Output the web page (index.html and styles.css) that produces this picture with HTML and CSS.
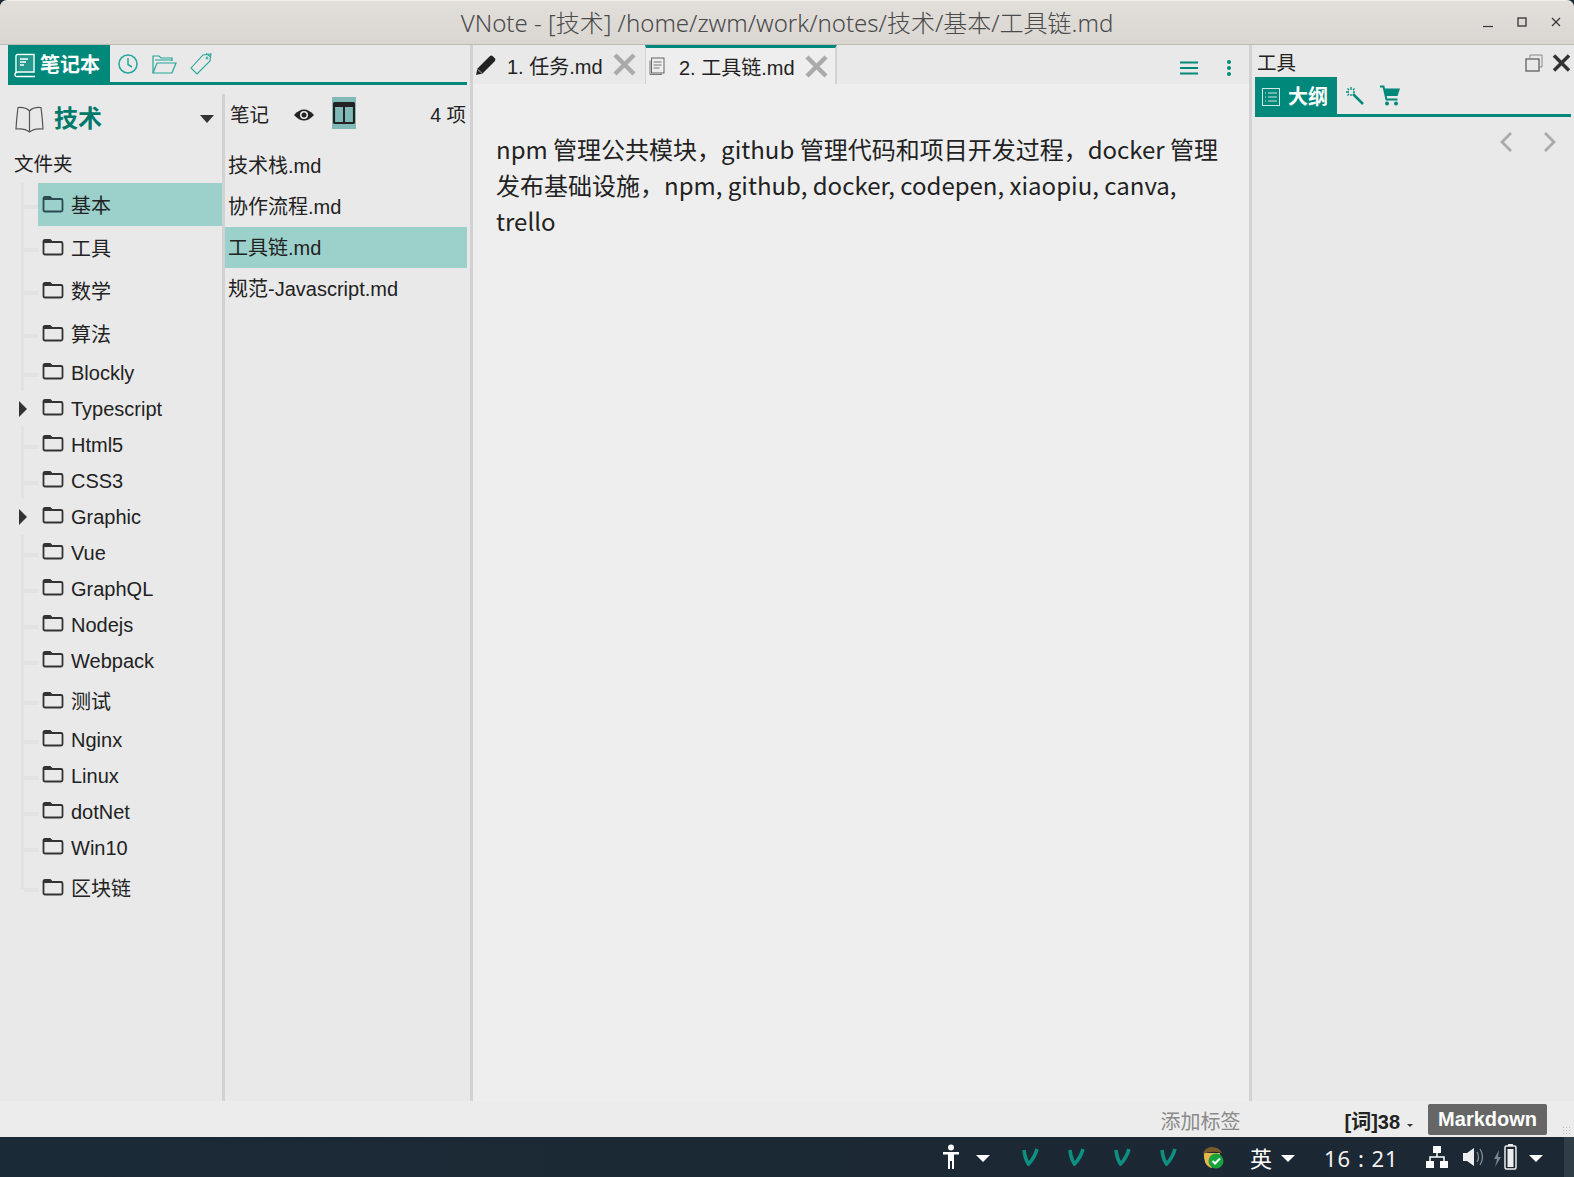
FILE: index.html
```html
<!DOCTYPE html>
<html lang="zh-CN">
<head>
    <meta charset="UTF-8">
    <title>VNote</title>
    <link rel="stylesheet" href="styles.css">
</head>
<body>
    <svg class="defs" width="0" height="0">
        <symbol id="folder" viewBox="0 0 22 18">
            <path d="M1.500 15V3.500Q1.500 2 3 2H8L10 4H19Q20.500 4 20.500 5.500V15Q20.500 16.500 19 16.500H3Q1.500 16.500 1.500 15Z" fill="none" stroke="currentColor" stroke-width="1.800"/>
            <path d="M1.500 3.500Q1.500 2 3 2H8L10 5H1.500Z" fill="currentColor"/>
        </symbol>
        <symbol id="vlogo" viewBox="0 0 18 18">
            <path d="M3 2Q4 11 7.500 16Q13.500 10 16 1" fill="none" stroke="currentColor" stroke-width="3.600"/>
        </symbol>
    </svg>

    <header class="titlebar">
        <span></span>
        <div class="title">VNote - [技术] /home/zwm/work/notes/技术/基本/工具链.md</div>
        <div class="win-controls">
            <svg width="12" height="12" viewBox="0 0 12 12"><path d="M1 10.500H11" stroke="#333" stroke-width="1.200"/></svg>
            <svg width="12" height="12" viewBox="0 0 12 12"><rect x="2" y="2" width="8" height="8" fill="none" stroke="#333" stroke-width="1.300"/></svg>
            <svg width="12" height="12" viewBox="0 0 12 12"><path d="M2 2L10 10M10 2L2 10" stroke="#333" stroke-width="1.100"/></svg>
        </div>
    </header>

    <main class="workspace">
        <section class="left-panel">
            <div class="tabstrip">
                <div class="tab-active">
                    <svg width="24" height="25" viewBox="0 0 24 25"><path d="M3 19V3Q3 1.500 4.500 1.500H21V19H5Q2 19 2 21.500T5 23.500H22" fill="none" stroke="#fff" stroke-width="1.400"/><rect x="5" y="3" width="15" height="15" fill="#fff" opacity=".15"/><path d="M7 6H15M7 9H13M7 12H11" stroke="#fff" stroke-width="1.300"/></svg>
                    <span>笔记本</span>
                </div>
                <svg class="strip-icon" width="22" height="22" viewBox="0 0 22 22"><circle cx="11" cy="11" r="9" fill="none" stroke="#26a69a" stroke-width="1.500"/><path d="M11 5V11.500L15 14" fill="none" stroke="#26a69a" stroke-width="1.500"/></svg>
                <svg class="strip-icon" width="26" height="22" viewBox="0 0 26 22"><path d="M2 20V3H8L10 5H21V8M4 7H21" fill="none" stroke="#26a69a" stroke-width="1.200"/><path d="M2 20L6 10H25L21 20Z" fill="none" stroke="#26a69a" stroke-width="1.200"/></svg>
                <svg class="strip-icon" width="24" height="24" viewBox="0 0 24 24"><path d="M2 16L14 3L22 2L21 9L8 22Z M17 1.500L22 5" fill="none" stroke="#26a69a" stroke-width="1.100"/><circle cx="18" cy="6" r="1" fill="none" stroke="#26a69a"/></svg>
            </div>

            <div class="left-columns">
                <div class="folder-pane">
                    <div class="notebook-select">
                        <svg width="29" height="29" viewBox="0 0 29 29"><path d="M14.500 6Q11 2 3 2.500Q1.500 14 1 24Q10 23 14.500 27Q19 23 28 24Q27.500 14 26 2.500Q18 2 14.500 6ZM14.500 6V27" fill="none" stroke="#555" stroke-width="1.200"/></svg>
                        <span class="notebook-name">技术</span>
                        <i class="arrow-down"></i>
                    </div>
                    <div class="pane-label">文件夹</div>
                    <ul class="tree">
                        <li class="row cjk selected"><svg class="ficon"><use href="#folder"/></svg>基本</li>
                        <li class="row cjk"><svg class="ficon"><use href="#folder"/></svg>工具</li>
                        <li class="row cjk"><svg class="ficon"><use href="#folder"/></svg>数学</li>
                        <li class="row cjk"><svg class="ficon"><use href="#folder"/></svg>算法</li>
                        <li class="row"><svg class="ficon"><use href="#folder"/></svg>Blockly</li>
                        <li class="row expandable"><svg class="ficon"><use href="#folder"/></svg>Typescript</li>
                        <li class="row"><svg class="ficon"><use href="#folder"/></svg>Html5</li>
                        <li class="row"><svg class="ficon"><use href="#folder"/></svg>CSS3</li>
                        <li class="row expandable"><svg class="ficon"><use href="#folder"/></svg>Graphic</li>
                        <li class="row"><svg class="ficon"><use href="#folder"/></svg>Vue</li>
                        <li class="row"><svg class="ficon"><use href="#folder"/></svg>GraphQL</li>
                        <li class="row"><svg class="ficon"><use href="#folder"/></svg>Nodejs</li>
                        <li class="row"><svg class="ficon"><use href="#folder"/></svg>Webpack</li>
                        <li class="row cjk"><svg class="ficon"><use href="#folder"/></svg>测试</li>
                        <li class="row"><svg class="ficon"><use href="#folder"/></svg>Nginx</li>
                        <li class="row"><svg class="ficon"><use href="#folder"/></svg>Linux</li>
                        <li class="row"><svg class="ficon"><use href="#folder"/></svg>dotNet</li>
                        <li class="row"><svg class="ficon"><use href="#folder"/></svg>Win10</li>
                        <li class="row cjk"><svg class="ficon"><use href="#folder"/></svg>区块链</li>
                    </ul>
                </div>
                <div class="notes-pane">
                    <div class="notes-head">
                        <span class="notes-title">笔记</span>
                        <svg class="eye" width="22" height="14" viewBox="0 0 22 14"><path d="M1 7Q11 -4 21 7Q11 18 1 7Z" fill="#222"/><circle cx="11" cy="7" r="4" fill="#eee"/><circle cx="11" cy="7" r="2.500" fill="#222"/></svg>
                        <div class="layout-btn">
                            <svg width="22" height="22" viewBox="0 0 22 22"><rect x="1" y="1" width="20" height="20" rx="1" fill="none" stroke="#222" stroke-width="2.200"/><path d="M1 3.500H21" stroke="#222" stroke-width="3"/><path d="M11 5V21" stroke="#222" stroke-width="2"/></svg>
                        </div>
                        <span class="notes-count">4 项</span>
                    </div>
                    <ul class="note-list">
                        <li>技术栈.md</li>
                        <li>协作流程.md</li>
                        <li class="selected">工具链.md</li>
                        <li>规范-Javascript.md</li>
                    </ul>
                </div>
            </div>
        </section>

        <section class="editor">
            <div class="editor-tabs">
                <div class="doc-tab first">
                    <svg width="22" height="22" viewBox="0 0 22 22"><path d="M1 21L2.500 14.500L14.500 2.500Q16 1 17.500 2L20 4.500Q21 6 19.500 7.500L7.500 19.500Z" fill="#222"/><path d="M3 15.500L6.500 19" stroke="#eee" stroke-width=".8"/></svg>
                    <span class="doc-name">1. 任务.md</span>
                    <svg class="doc-close" width="23" height="23" viewBox="0 0 23 23"><path d="M2 2L21 21M21 2L2 21" stroke="#aaa" stroke-width="4.500"/></svg>
                </div>
                <div class="doc-tab current">
                    <svg width="18" height="19" viewBox="0 0 18 19"><path d="M3 3.500V17.500H15" fill="none" stroke="#777" stroke-width="1"/><rect x="4.500" y="1" width="12.500" height="15" fill="none" stroke="#666" stroke-width="1"/><path d="M6.500 5H14.500M6.500 8H14.500M6.500 11H12.500" stroke="#777" stroke-width="1"/></svg>
                    <span class="doc-name">2. 工具链.md</span>
                    <svg class="doc-close" width="23" height="23" viewBox="0 0 23 23"><path d="M2 2L21 21M21 2L2 21" stroke="#aaa" stroke-width="4.500"/></svg>
                </div>
                <div class="editor-actions">
                    <svg width="18" height="14" viewBox="0 0 18 14"><path d="M0 1.500H18M0 7H18M0 12.500H18" stroke="#00897b" stroke-width="2"/></svg>
                    <svg width="4" height="16" viewBox="0 0 4 16"><circle cx="2" cy="2" r="2" fill="#00897b"/><circle cx="2" cy="8" r="2" fill="#00897b"/><circle cx="2" cy="14" r="2" fill="#00897b"/></svg>
                </div>
            </div>
            <div class="editor-body">
                <p>npm 管理公共模块，github 管理代码和项目开发过程，docker 管理发布基础设施，npm, github, docker, codepen, xiaopiu, canva, trello</p>
            </div>
        </section>

        <aside class="right-panel">
            <div class="tools-head">
                <span>工具</span>
                <div class="tools-btns">
                    <svg width="18" height="18" viewBox="0 0 18 18"><path d="M5 4V1H17V13H14" fill="none" stroke="#888" stroke-width="1"/><rect x="1" y="5" width="13" height="12" fill="none" stroke="#555" stroke-width="1.200"/></svg>
                    <svg width="19" height="18" viewBox="0 0 19 18"><path d="M2 1.500L17 16.500M17 1.500L2 16.500" stroke="#333" stroke-width="3.500"/></svg>
                </div>
            </div>
            <div class="tabstrip tools-strip">
                <div class="tab-active">
                    <svg width="18" height="18" viewBox="0 0 18 18"><rect x=".5" y=".5" width="17" height="17" fill="none" stroke="#cfe8e5" stroke-width="1"/><path d="M3 5H4M6 5H15M3 9H4M6 9H15M3 13H4M6 13H15" stroke="#cfe8e5" stroke-width="1.200"/></svg>
                    <span>大纲</span>
                </div>
                <svg class="strip-icon" width="20" height="20" viewBox="0 0 20 20"><path d="M8 8L18 18" stroke="#00897b" stroke-width="2.500"/><path d="M6 1V4M6 8V10M1 6H4M8 6H10M2.500 2.500L4 4M9.500 2.500L8 4M2.500 9.500L4 8" stroke="#00897b" stroke-width="1.300"/></svg>
                <svg class="strip-icon" width="22" height="22" viewBox="0 0 22 22"><path d="M1 1.500H4.500L7.500 14.500H18.500" fill="none" stroke="#00897b" stroke-width="2"/><path d="M5 3.500H21L18.500 11H6.500Z" fill="#00897b"/><circle cx="8" cy="18.500" r="2" fill="#00897b"/><circle cx="17" cy="18.500" r="2" fill="#00897b"/></svg>
            </div>
            <div class="outline-nav">
                <svg width="14" height="22" viewBox="0 0 14 22"><path d="M12 2L3 11L12 20" fill="none" stroke="#aaa" stroke-width="2.800"/></svg>
                <svg width="14" height="22" viewBox="0 0 14 22"><path d="M2 2L11 11L2 20" fill="none" stroke="#aaa" stroke-width="2.800"/></svg>
            </div>
        </aside>
    </main>

    <footer class="statusbar">
        <span class="add-tag">添加标签</span>
        <span class="word-count">[词]38</span>
        <i class="mini-arrow"></i>
        <span class="mode-btn">Markdown</span>
        <i class="grip"></i>
    </footer>

    <div class="taskbar">
        <svg class="t-person" width="18" height="26" viewBox="0 0 18 26"><circle cx="9" cy="3.500" r="3" fill="#fff"/><path d="M1 8H17V10.500H12V25H10V17H8V25H6V10.500H1Z" fill="#fff"/></svg>
        <i class="t-arrow t-arrow-person"></i>
        <svg class="t-vnote"><use href="#vlogo"/></svg>
        <svg class="t-vnote"><use href="#vlogo"/></svg>
        <svg class="t-vnote"><use href="#vlogo"/></svg>
        <svg class="t-vnote"><use href="#vlogo"/></svg>
        <svg class="t-acorn" width="22" height="24" viewBox="0 0 22 24"><path d="M2 8Q1 20 9 23Q18 20 18 8Z" fill="#e9b64c"/><path d="M1 9Q3 2 10 2Q17 2 20 8Q10 5 1 9Z" fill="#7b5a2e"/><circle cx="14" cy="16" r="7.500" fill="#16a23c"/><path d="M10.500 16L13 18.500L18 13.500" fill="none" stroke="#fff" stroke-width="2"/></svg>
        <span class="t-ime">英</span>
        <i class="t-arrow"></i>
        <span class="t-clock">16 : 21</span>
        <svg class="t-net" width="22" height="24" viewBox="0 0 22 24"><rect x="7" y="1" width="8" height="7" fill="#fff"/><rect x="0" y="16" width="8" height="7" fill="#fff"/><rect x="14" y="16" width="8" height="7" fill="#fff"/><path d="M11 8V12M4 16V12H18V16" fill="none" stroke="#fff" stroke-width="1.500"/></svg>
        <svg class="t-sound" width="24" height="22" viewBox="0 0 24 22"><path d="M1 7H5L12 2V20L5 15H1Z" fill="#eee"/><path d="M15 6Q18 11 15 16M18 3Q23 11 18 19" fill="none" stroke="#8a949b" stroke-width="1.200"/></svg>
        <svg class="t-battery" width="24" height="28" viewBox="0 0 24 28"><path d="M6 7L1 16H4L2 24L8 14H5Z" fill="#7a848b"/><rect x="12" y="3" width="11" height="23" rx="1.500" fill="none" stroke="#eee" stroke-width="1.500"/><rect x="15" y="1" width="5" height="2" fill="#eee"/><rect x="14.500" y="6" width="6" height="18" fill="#eee"/></svg>
        <i class="t-arrow t-arrow-end"></i>
        <i class="t-strip"></i>
    </div>
</body>
</html>
```

FILE: styles.css
```css
* {
    box-sizing: border-box;
}
html, body {
    margin: 0;
    height: 100%;
    overflow: hidden;
}
body {
    display: flex;
    flex-direction: column;
    height: 1177px;
    background-color: #1b2a35;
    color: #222;
    font-family: "Liberation Sans", "Noto Sans CJK SC", sans-serif;
    font-size: 20px;
}
ul {
    list-style: none;
    margin: 0;
    padding: 0;
}
.defs {
    position: absolute;
}

/* title bar */
.titlebar {
    display: grid;
    grid-template-columns: 1fr auto 1fr;
    align-items: center;
    height: 45px;
    flex: none;
    background: linear-gradient(#e2dfdb, #dad6d2);
    border-top: 1px solid #f0eeeb;
    border-bottom: 1px solid #bdb9b3;
    border-radius: 7px 7px 0 0;
}
.title {
    margin-bottom: 2px;
    color: #4a4a4a;
    font-family: "Noto Sans", "Noto Sans CJK SC", sans-serif;
    font-size: 24px;
    font-weight: 300;
}
.win-controls {
    display: flex;
    justify-content: flex-end;
    gap: 22px;
    padding-right: 12px;
    margin-bottom: 1px;
}

/* panels */
.workspace {
    display: flex;
    flex: 1;
    min-height: 0;
    background-color: #e9e9e9;
}
.left-panel {
    display: flex;
    flex-direction: column;
    width: 470px;
    padding-left: 8px;
    padding-right: 3px;
    flex: none;
    line-height: 1;
}
.tabstrip {
    display: flex;
    align-items: center;
    height: 40px;
    flex: none;
    border-bottom: 3px solid #00897b;
}
.tab-active {
    display: flex;
    align-items: center;
    gap: 3px;
    height: 40px;
    margin-bottom: -3px;
    padding-left: 5px;
    width: 102px;
    background-color: #00897b;
    color: #fff;
    font-weight: 700;
}
.tabstrip .strip-icon {
    margin-left: 7px;
}
.tabstrip .strip-icon + .strip-icon {
    margin-left: 12px;
}
.left-columns {
    display: flex;
    flex: 1;
    min-height: 0;
    padding-top: 9px;
}

/* folders */
.folder-pane {
    width: 225px;
    flex: none;
    margin-left: -8px;
    border-right: 3px solid #d2d2d2;
}
.notebook-select {
    display: flex;
    align-items: center;
    height: 48px;
    padding-left: 15px;
    padding-top: 2px;
}
.notebook-name {
    margin-left: 10px;
    color: #00796b;
    font-size: 24px;
    font-weight: 700;
}
.arrow-down {
    margin-left: auto;
    margin-right: 8px;
    border: 7px solid transparent;
    border-top: 8px solid #333;
    border-bottom: 0;
}
.pane-label {
    height: 41px;
    padding: 13px 0 0 14px;
    font-size: 19.500px;
}
.tree {
    margin-left: 21px;
    border-left: 3px solid #e2e2e2;
    height: 706px;
}
.row {
    position: relative;
    display: flex;
    align-items: center;
    height: 36px;
    margin-left: 14px;
    padding-left: 4px;
}
.row.cjk {
    height: 43px;
    padding-top: 2px;
}
.row::before {
    content: "";
    position: absolute;
    left: -14px;
    top: 50%;
    width: 14px;
    height: 4px;
    background-color: #e2e2e2;
}
.row.selected {
    background-color: #9bd0cb;
}
.row.expandable::before {
    left: -17px;
    top: 0;
    width: 17px;
    height: 100%;
    background-color: #e9e9e9;
}
.row.expandable::after {
    content: "";
    position: absolute;
    left: -19px;
    top: 10px;
    border: 8px solid transparent;
    border-left: 8px solid #333;
    border-right: 0;
}
.ficon {
    width: 22px;
    height: 18px;
    margin-right: 7px;
    margin-top: -4px;
    color: #333;
}
.selected .ficon {
    color: #2b4a52;
}

/* notes */
.notes-pane {
    flex: 1;
    min-width: 0;
}
.notes-head {
    display: flex;
    align-items: center;
    height: 41px;
    padding-left: 5px;
}
.notes-title {
    padding-top: 3px;
    font-size: 19.500px;
}
.eye {
    margin-left: 24px;
}
.layout-btn {
    display: flex;
    align-items: center;
    justify-content: center;
    width: 24px;
    height: 32px;
    margin-left: 17px;
    margin-top: -4px;
    background-color: #80b9b8;
}
.notes-count {
    margin-left: auto;
    padding-top: 3px;
    padding-right: 1px;
    font-size: 19.500px;
}
.note-list {
    margin-top: 10px;
}
.note-list li {
    display: flex;
    align-items: center;
    height: 41px;
    padding-left: 3px;
}
.note-list .selected {
    background-color: #9bd0cb;
}

/* editor */
.editor {
    display: flex;
    flex-direction: column;
    flex: 1;
    min-width: 0;
    background-color: #eeeeee;
    border-left: 3px solid #d2d2d2;
    border-right: 3px solid #d2d2d2;
    line-height: 1;
}
.editor-tabs {
    display: flex;
    height: 39px;
    flex: none;
    background-color: #e9e9e9;
}
.doc-tab {
    display: flex;
    align-items: center;
    height: 39px;
    padding-left: 2px;
}
.doc-tab.first {
    width: 172px;
}
.doc-tab.current {
    width: 192px;
    padding-left: 1px;
    background-color: #eeeeee;
    border-top: 3px solid #00897b;
    border-left: 1px solid #d2d2d2;
    border-right: 2px solid #d2d2d2;
}
.doc-name {
    margin-left: 10px;
    margin-top: 4px;
}
.doc-tab.current .doc-name {
    margin-left: 14px;
}
.doc-close {
    margin-left: 10px;
}
.editor-actions {
    display: flex;
    align-items: center;
    gap: 29px;
    margin-left: auto;
    padding-right: 18px;
    padding-top: 6px;
}
.editor-body {
    flex: 1;
    padding: 47px 23px 0;
}
.editor-body p {
    margin: 0;
    font-family: "Noto Sans CJK SC", sans-serif;
    font-size: 24px;
    line-height: 36px;
}

/* tools */
.right-panel {
    width: 322px;
    flex: none;
    padding: 0 3px;
    line-height: 1;
}
.tools-head {
    display: flex;
    align-items: center;
    justify-content: space-between;
    height: 32px;
    padding: 5px 0 0 2px;
    font-size: 19.500px;
}
.tools-btns {
    display: flex;
    gap: 9px;
    margin-top: -2px;
}
.tools-strip .tab-active {
    width: 82px;
    gap: 8px;
    padding-left: 7px;
}
.tools-strip .strip-icon + .strip-icon {
    margin-left: 14px;
}
.tools-strip .tab-active + .strip-icon {
    margin-left: 8px;
}
.outline-nav {
    display: flex;
    justify-content: flex-end;
    gap: 30px;
    padding: 14px 14px 0 0;
}

/* status bar */
.statusbar {
    position: relative;
    display: flex;
    align-items: center;
    height: 36px;
    flex: none;
    background-color: #ececec;
    padding-right: 27px;
    line-height: 1;
}
.add-tag {
    margin-left: auto;
    padding-top: 5px;
    color: #8a8a8a;
}
.word-count {
    margin-left: 104px;
    padding-top: 5px;
    font-weight: 700;
}
.mini-arrow {
    margin: 12px 0 0 7px;
    border: 3.500px solid transparent;
    border-top: 3.500px solid #333;
    border-bottom: 0;
}
.mode-btn {
    margin-left: 15px;
    padding: 5px 10px 6px;
    background-color: #666666;
    border-radius: 2px;
    color: #fff;
    font-weight: 700;
}
.grip {
    position: absolute;
    right: 2px;
    bottom: 1px;
    width: 10px;
    height: 10px;
    background-image: radial-gradient(#bbb 1px, transparent 1px);
    background-size: 3px 3px;
}

/* desktop panel */
.taskbar {
    display: flex;
    align-items: center;
    height: 40px;
    flex: none;
    padding-left: 942px;
    background: linear-gradient(90deg, #1a2a36, #1c2833);
    color: #fff;
}
.t-arrow {
    border: 7px solid transparent;
    border-top: 7px solid #fff;
    border-bottom: 0;
    margin-top: 2px;
}
.t-arrow-person {
    margin-left: 16px;
}
.t-vnote {
    width: 18px;
    height: 18px;
    margin-left: 28px;
    color: #0f8f80;
}
.t-arrow-person + .t-vnote {
    margin-left: 31px;
}
.t-acorn {
    margin-left: 25px;
}
.t-ime {
    margin-left: 26px;
    font-size: 22px;
}
.t-ime + .t-arrow {
    margin-left: 9px;
}
.t-clock {
    margin-left: 29px;
    padding-top: 2px;
    font-family: "Noto Sans", sans-serif;
    font-size: 22px;
    letter-spacing: 1px;
    color: #f2f2f2;
}
.t-net {
    margin-left: 27px;
}
.t-sound {
    margin-left: 14px;
}
.t-battery {
    margin-left: 7px;
}
.t-arrow-end {
    margin-left: 12px;
}
.t-strip {
    align-self: stretch;
    width: 10px;
    margin-left: auto;
    background-color: #2f3d46;
}
```
